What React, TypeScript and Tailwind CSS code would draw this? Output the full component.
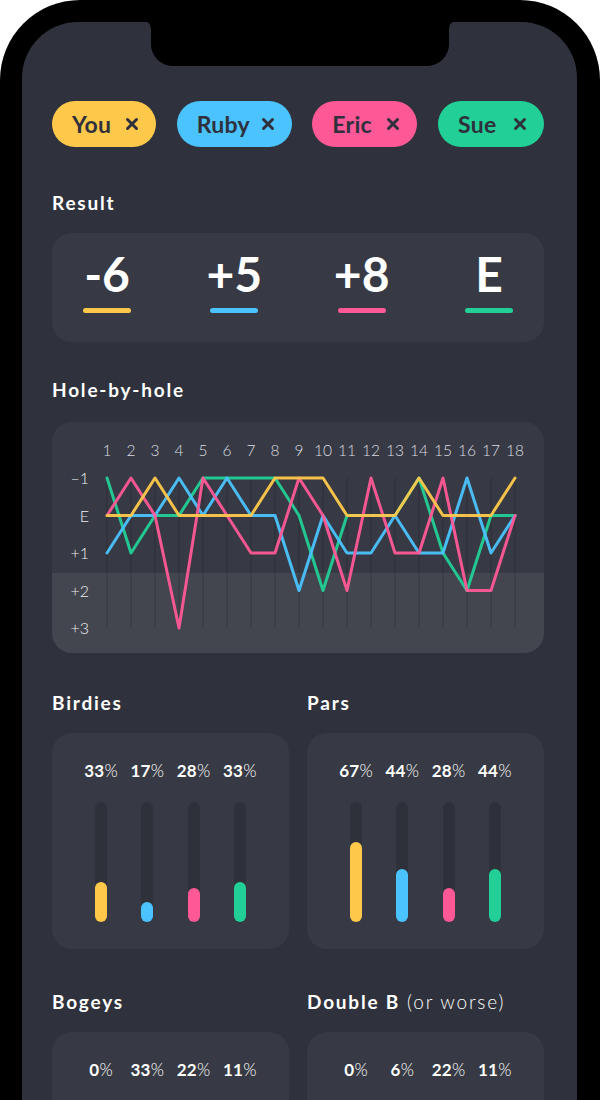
import React from "react";

const players = [
  { name: "You", chip: "bg-[#fec84b] w-[104px]", bar: "bg-[#fec84b]", stroke: "#fec84b", result: "-6" },
  { name: "Ruby", chip: "bg-[#4bc3fe] w-[115px]", bar: "bg-[#4bc3fe]", stroke: "#4bc3fe", result: "+5" },
  { name: "Eric", chip: "bg-[#fe5896] w-[105px]", bar: "bg-[#fe5896]", stroke: "#fe5896", result: "+8" },
  { name: "Sue", chip: "bg-[#22cf96] w-[106px]", bar: "bg-[#22cf96]", stroke: "#22cf96", result: "E" },
];

const holes: Record<string, number[]> = {
  Sue: [-1, 1, 0, 0, -1, -1, -1, -1, 0, 2, 0, 0, 0, -1, 1, 2, 0, 0],
  Ruby: [1, 0, 0, -1, 0, -1, 0, 0, 2, 0, 1, 1, 0, 1, 1, -1, 1, 0],
  Eric: [0, -1, 0, 3, -1, 0, 1, 1, -1, 0, 2, -1, 1, 1, -1, 2, 2, 0],
  You: [0, 0, -1, 0, 0, 0, 0, -1, -1, -1, 0, 0, 0, -1, 0, 0, 0, -1],
};

const drawOrder = ["Sue", "Ruby", "Eric", "You"];

function XIcon() {
  return (
    <svg width="14" height="14" viewBox="0 0 14 14" fill="none">
      <path d="M2.5 2.5 L11.5 11.5 M11.5 2.5 L2.5 11.5" stroke="#2e313c" strokeWidth="3" strokeLinecap="round" />
    </svg>
  );
}

function Label({ children }: { children: React.ReactNode }) {
  return <div className="text-[19px] leading-[24px] font-bold text-white tracking-[1.8px] whitespace-nowrap">{children}</div>;
}

function Chart() {
  const xs = (i: number) => 55 + i * 24;
  const ys = (v: number) => 56 + (v + 1) * 37.5;
  const rows = ["\u20131", "E", "+1", "+2", "+3"];
  return (
    <svg width="492" height="231" viewBox="0 0 492 231" className="block">
      <rect x="0" y="151" width="492" height="80" fill="#43464e" />
      {Array.from({ length: 18 }).map((_, i) => (
        <line key={i} x1={xs(i)} x2={xs(i)} y1={56} y2={206} stroke="#000" strokeOpacity="0.13" strokeWidth="1.5" />
      ))}
      {Array.from({ length: 18 }).map((_, i) => (
        <text key={i} x={xs(i)} y={34} textAnchor="middle" fontSize="15.5" fontWeight="300" fill="#dcdde2">
          {i + 1}
        </text>
      ))}
      {rows.map((r, i) => (
        <text key={r} x={37} y={56 + i * 37.5 + 6} textAnchor="end" fontSize="16" fontWeight="300" fill="#eceef1">
          {r}
        </text>
      ))}
      {drawOrder.map((n) => {
        const p = players.find((q) => q.name === n)!;
        const pts = holes[n].map((v, i) => `${xs(i)},${ys(v)}`).join(" ");
        return (
          <polyline key={n} points={pts} fill="none" stroke={p.stroke} strokeWidth="3" strokeLinejoin="round" strokeLinecap="round" strokeOpacity="0.95" />
        );
      })}
    </svg>
  );
}

function StatCard({ title, light, pcts }: { title: string; light?: string; pcts: number[] }) {
  return (
    <div className="w-[237px]">
      <Label>
        {title}
        {light && <span className="font-light"> {light}</span>}
      </Label>
      <div className="mt-[18px] h-[216px] rounded-[20px] bg-[#373a44] px-[26px] pt-[29px] grid grid-cols-4">
        {pcts.map((p, i) => (
          <div key={i} className="flex flex-col items-center">
            <div className="text-[17px] leading-[18px] text-white whitespace-nowrap tracking-[0.3px]">
              <span className="font-bold">{p}</span>
              <span className="font-light">%</span>
            </div>
            <div className="mt-[22px] w-[12px] h-[120px] rounded-full bg-[#2e313a] flex flex-col justify-end">
              <div className={`w-full rounded-full ${players[i].bar}`} style={{ height: `${Math.round((p / 100) * 120)}px` }} />
            </div>
          </div>
        ))}
      </div>
    </div>
  );
}

export default function App() {
  return (
    <div className="w-[600px] h-[1100px] overflow-hidden bg-white font-['Lato',sans-serif]">
      <div className="h-[1250px] bg-black rounded-[80px] pt-[22px] pl-[22px] pr-[23px]">
        <div className="relative h-[1228px] bg-[#2f323c] rounded-[56px] pt-[79px] pl-[30px]">
          <svg className="absolute top-0 left-[124px]" width="308" height="44" viewBox="0 0 308 44">
            <path d="M0 0 H308 C305 0 303 3 303 8 V22 C303 34 293 44 281 44 H27 C15 44 5 34 5 22 V8 C5 3 3 0 0 0 Z" fill="#000" />
          </svg>
          <div className="w-[492px]">
            <div className="flex justify-between">
              {players.map((p) => (
                <div key={p.name} className={`h-[46px] rounded-full pl-[20px] pr-[17px] flex items-center justify-between ${p.chip}`}>
                  <span className="text-[23px] font-bold text-[#2e313c] leading-none tracking-[0.3px]">{p.name}</span>
                  <XIcon />
                </div>
              ))}
            </div>

            <div className="mt-[44px]">
              <Label>Result</Label>
            </div>
            <div className="mt-[18px] h-[109px] rounded-[20px] bg-[#373a44] px-[31px] pt-[17px] flex justify-between">
              {players.map((p) => (
                <div key={p.name} className="w-12 flex flex-col items-center">
                  <div className="text-[48px] leading-none font-bold text-white whitespace-nowrap">{p.result}</div>
                  <div className={`mt-[10px] h-[5px] w-12 rounded-full ${p.bar}`} />
                </div>
              ))}
            </div>

            <div className="mt-[36px]">
              <Label>Hole-by-hole</Label>
            </div>
            <div className="mt-[20px] h-[231px] rounded-[20px] overflow-hidden bg-[#373a44]">
              <Chart />
            </div>

            <div className="mt-[38px] flex justify-between">
              <StatCard title="Birdies" pcts={[33, 17, 28, 33]} />
              <StatCard title="Pars" pcts={[67, 44, 28, 44]} />
            </div>

            <div className="mt-[41px] flex justify-between">
              <StatCard title="Bogeys" pcts={[0, 33, 22, 11]} />
              <StatCard title="Double B" light="(or worse)" pcts={[0, 6, 22, 11]} />
            </div>
          </div>
        </div>
      </div>
    </div>
  );
}
